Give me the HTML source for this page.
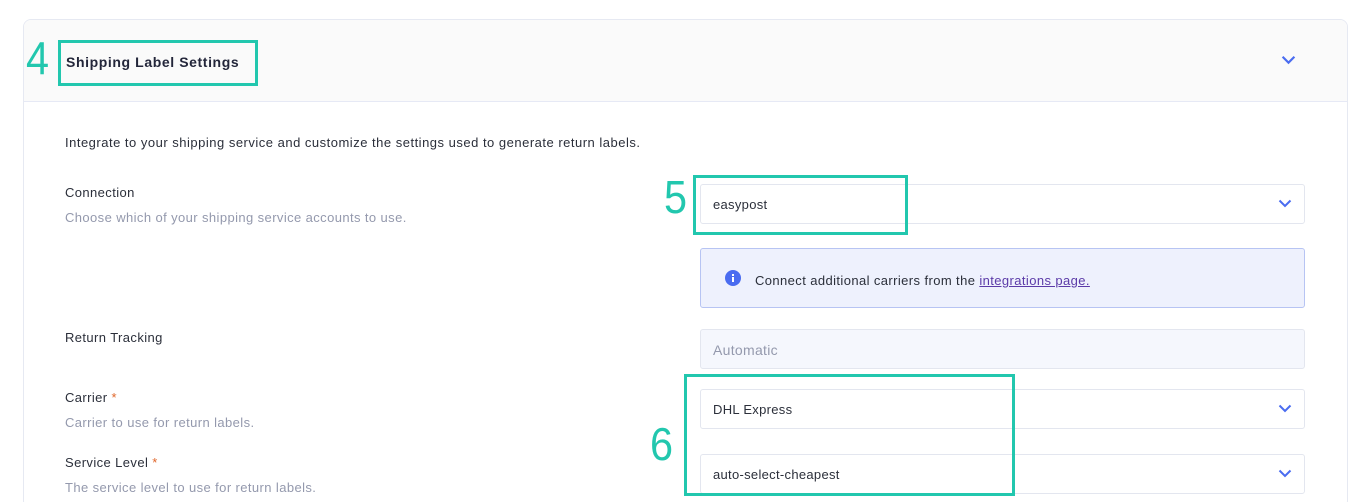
<!DOCTYPE html>
<html><head><meta charset="utf-8"><style>
*{box-sizing:border-box;margin:0;padding:0}
html,body{width:1364px;height:502px;overflow:hidden}
body{background:#fff;font-family:"Liberation Sans",sans-serif;position:relative;color:#2b2f3a}
.card{position:absolute;left:23px;top:19px;width:1325px;height:490px;border:1px solid #e6e9f2;border-radius:8px;overflow:hidden}
.hdr{position:absolute;left:0;top:0;right:0;height:82px;background:#fafafa;border-bottom:1px solid #e6e9f5}
.t{position:absolute;font-size:13px;white-space:nowrap;letter-spacing:0.4px}
.sub{color:#9499ad}
.inp{position:absolute;left:700px;width:605px;height:40px;border:1px solid #e3e6ef;border-radius:3px;background:#fff;font-size:13px;padding:12px 0 0 12px;color:#2b2f3a;letter-spacing:0.3px}
.chev{position:absolute;right:12px;top:14px}
.box{position:absolute;border:3px solid #22c7ae}
.num{position:absolute;color:#22c7ae;font-size:46px;line-height:1;transform:scaleX(0.9);transform-origin:left}
</style></head><body>
<div class="card"><div class="hdr"></div></div>
<div class="t" style="left:66px;top:54px;font-size:14px;font-weight:bold;color:#23263a;letter-spacing:0.6px">Shipping Label Settings</div>
<svg style="position:absolute;left:1281px;top:55px" width="15" height="10" viewBox="0 0 14 9"><path d="M1.5 1.5L7 7l5.5-5.5" fill="none" stroke="#4a6cf0" stroke-width="2"/></svg>
<div class="t" style="left:65px;top:135px;letter-spacing:0.5px">Integrate to your shipping service and customize the settings used to generate return labels.</div>
<div class="t" style="left:65px;top:185px">Connection</div>
<div class="t sub" style="left:65px;top:210px">Choose which of your shipping service accounts to use.</div>
<div class="t" style="left:65px;top:330px">Return Tracking</div>
<div class="t" style="left:65px;top:390px">Carrier <span style="color:#e0662a">*</span></div>
<div class="t sub" style="left:65px;top:415px">Carrier to use for return labels.</div>
<div class="t" style="left:65px;top:455px">Service Level <span style="color:#e0662a">*</span></div>
<div class="t sub" style="left:65px;top:480px">The service level to use for return labels.</div>

<div class="inp" style="top:184px">easypost<svg class="chev" width="14" height="9" viewBox="0 0 14 9"><path d="M1.5 1.5L7 7l5.5-5.5" fill="none" stroke="#4a6cf0" stroke-width="2"/></svg></div>
<div style="position:absolute;left:700px;top:248px;width:605px;height:60px;background:#eef1fd;border:1px solid #b7c4f3;border-radius:3px"></div>
<svg style="position:absolute;left:725px;top:270px" width="16" height="16" viewBox="0 0 16 16"><circle cx="8" cy="8" r="8" fill="#4a6cf0"/><rect x="7" y="7" width="2" height="5" fill="#fff"/><rect x="7" y="4" width="2" height="2" fill="#fff"/></svg>
<div class="t" style="left:755px;top:273px">Connect additional carriers from the <span style="color:#5b3aa8;text-decoration:underline">integrations page.</span></div>
<div class="inp" style="top:329px;background:#f5f7fd;color:#9499ad;font-size:14px">Automatic</div>
<div class="inp" style="top:389px">DHL Express<svg class="chev" width="14" height="9" viewBox="0 0 14 9"><path d="M1.5 1.5L7 7l5.5-5.5" fill="none" stroke="#4a6cf0" stroke-width="2"/></svg></div>
<div class="inp" style="top:454px">auto-select-cheapest<svg class="chev" width="14" height="9" viewBox="0 0 14 9"><path d="M1.5 1.5L7 7l5.5-5.5" fill="none" stroke="#4a6cf0" stroke-width="2"/></svg></div>

<div class="box" style="left:58px;top:40px;width:200px;height:46px"></div>
<div class="box" style="left:693px;top:175px;width:215px;height:60px"></div>
<div class="box" style="left:684px;top:374px;width:331px;height:122px"></div>
<div class="num" style="left:26px;top:35px">4</div>
<div class="num" style="left:664px;top:174px">5</div>
<div class="num" style="left:650px;top:421px">6</div>
</body></html>
